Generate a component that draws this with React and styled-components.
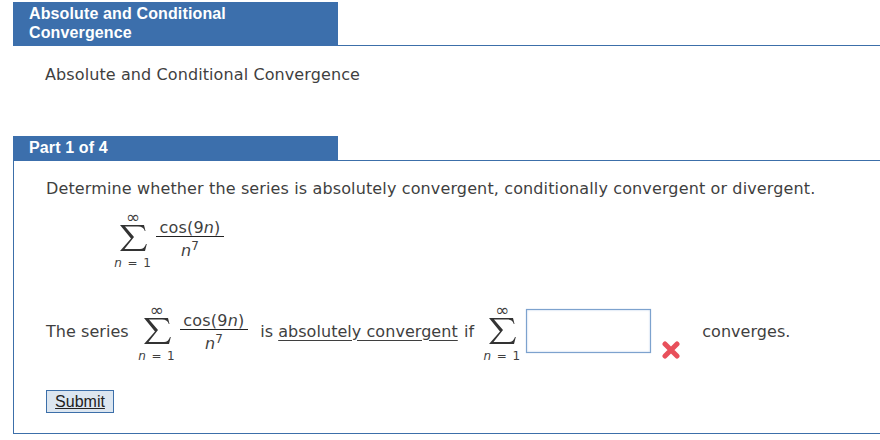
import React from "react";
import styled, { createGlobalStyle } from "styled-components";

const Global = createGlobalStyle`
  html, body { margin: 0; padding: 0; background: #fff; }
  body { width: 880px; height: 440px; overflow: hidden; font-family: "DejaVu Sans", Verdana, sans-serif; color: #3f3f3f; }
`;
const Page = styled.div`
  width: 880px; height: 440px; padding: 2px 0 0 13px; box-sizing: border-box; display: flex; flex-direction: column; overflow: hidden;
`;
const TabRow = styled.div`
  display: flex; width: 867px; border-bottom: 1px solid #3c6fa9; box-sizing: border-box;
`;
const Tab = styled.h2`
  margin: 0 0 -1px; width: 325px; box-sizing: border-box; padding: 2px 16px 4px; background: #3c6fac; color: #fff;
  font: bold 16px/19px "Liberation Sans", Arial, sans-serif; letter-spacing: 0.13px;
`;
const Intro = styled.p`
  margin: 0; padding: 19px 0 0 32px; height: 90px; box-sizing: border-box; font-size: 16px; line-height: 19px; letter-spacing: 0.1px;
`;
const Panel = styled.section`
  width: 867px; height: 273px; box-sizing: border-box; border-left: 1px solid #3c6fa9; border-bottom: 1px solid #3c6fa9;
  padding: 18px 0 0 32px; font-size: 16px; display: flex; flex-direction: column;
`;
const Question = styled.p`margin: 0; line-height: 19px; letter-spacing: 0.13px;`;
const DisplayMath = styled.div`display: flex; margin: 9px 0 0 67px; height: 89px; align-items: flex-start;`;
const Expr = styled.span`display: inline-flex; align-items: center; margin-left: ${(p) => p.$offset || 0}px;`;
const Sum = styled.span`
  display: inline-flex; flex-direction: column; align-items: center; width: 40px; padding-top: 4px; font-size: 12px; line-height: 12px; letter-spacing: 0.9px;
  margin: 0 ${(p) => p.$after || 0}px 0 ${(p) => p.$before || 0}px;
`;
const InfinitySign = styled.span`font-size: 17px; letter-spacing: 0;`;
const Sigma = styled.svg`display: block; width: 28px; height: 28px; margin: 1px 0 5px;`;
const Fraction = styled.span`
  display: inline-flex; flex-direction: column; align-items: center; margin-left: 3px;
`;
const Num = styled.span`
  box-sizing: border-box; width: 68px; height: 21px; line-height: 24px; text-align: center; border-bottom: 1px solid #222; letter-spacing: 0.2px;
`;
const Den = styled.span`line-height: 20px; height: 24px; padding-top: 4px; box-sizing: border-box;`;
const Var = styled.i`font-style: italic;`;
const Sup = styled.sup`font-size: 12px; line-height: 0; vertical-align: 6px;`;
const AnswerLine = styled.div`display: flex; align-items: center; height: 70px; letter-spacing: 0.05px;`;
const Word = styled.span`white-space: pre; margin-left: ${(p) => p.$offset || 0}px;`;
const Link = styled.span`text-decoration: underline; text-decoration-thickness: 1px; text-underline-offset: 3px;`;
const Blank = styled.input`
  width: 125px; height: 44px; box-sizing: border-box; border: 1px solid #7da2ce; box-shadow: inset 0 0 2px #a9c2e2, 0 0 1px #a9c2e2; margin: 0; padding: 0; background: #fff; outline: none;
`;
const Mark = styled.svg`width: 18px; height: 18px; margin: 37px 0 0 11px;`;
const Submit = styled.button`
  margin: 24px 0 0; align-self: flex-start; width: 68px; height: 23px; padding: 0; box-sizing: border-box; border: 1px solid #3c6fa9; background: #dce6f0; color: #222;
  font: 16px/20px "Liberation Sans", Arial, sans-serif; text-decoration: underline;
`;

const SigmaGlyph = () => (
  <Sigma viewBox="0 0 28 28" aria-hidden="true">
    <path d="M1 1 H25 L26.500 7 H25.800 C25 4 23 2.500 19 2.500 H6 L15 13 L5.500 25 H21 C24 25 26 23 27 20 H27.800 L26 27 H1 L12 14.500 Z" fill="#333" />
  </Sigma>
);
const Series = ({ before, after }) => (
  <Sum $before={before} $after={after}><InfinitySign>∞</InfinitySign><SigmaGlyph /><span><Var>n</Var> = 1</span></Sum>
);
const Term = () => (
  <Fraction>
    <Num>cos(9<Var>n</Var>)</Num>
    <Den><Var>n</Var><Sup>7</Sup></Den>
  </Fraction>
);

export default function App() {
  return (
    <Page>
      <Global />
      <TabRow><Tab>Absolute and Conditional Convergence</Tab></TabRow>
      <Intro>Absolute and Conditional Convergence</Intro>
      <TabRow><Tab>Part 1 of 4</Tab></TabRow>
      <Panel>
        <Question>Determine whether the series is absolutely convergent, conditionally convergent or divergent.</Question>
        <DisplayMath><Expr><Series /><Term /></Expr></DisplayMath>
        <AnswerLine>
          <Word>The series </Word>
          <Expr $offset={3}><Series /><Term /></Expr>
          <Word $offset={2}>  is </Word><Link>absolutely convergent</Link><Word $offset={1}> if </Word>
          <Series before={3} after={4} />
          <Blank aria-label="answer" />
          <Mark viewBox="0 0 18 18" aria-hidden="true"><path d="M3 3 L15 15 M15 3 L3 15" stroke="#e8505b" strokeWidth="5" strokeLinecap="round" /></Mark>
          <Word $offset={22}>converges.</Word>
        </AnswerLine>
        <Submit type="button">Submit</Submit>
      </Panel>
    </Page>
  );
}
